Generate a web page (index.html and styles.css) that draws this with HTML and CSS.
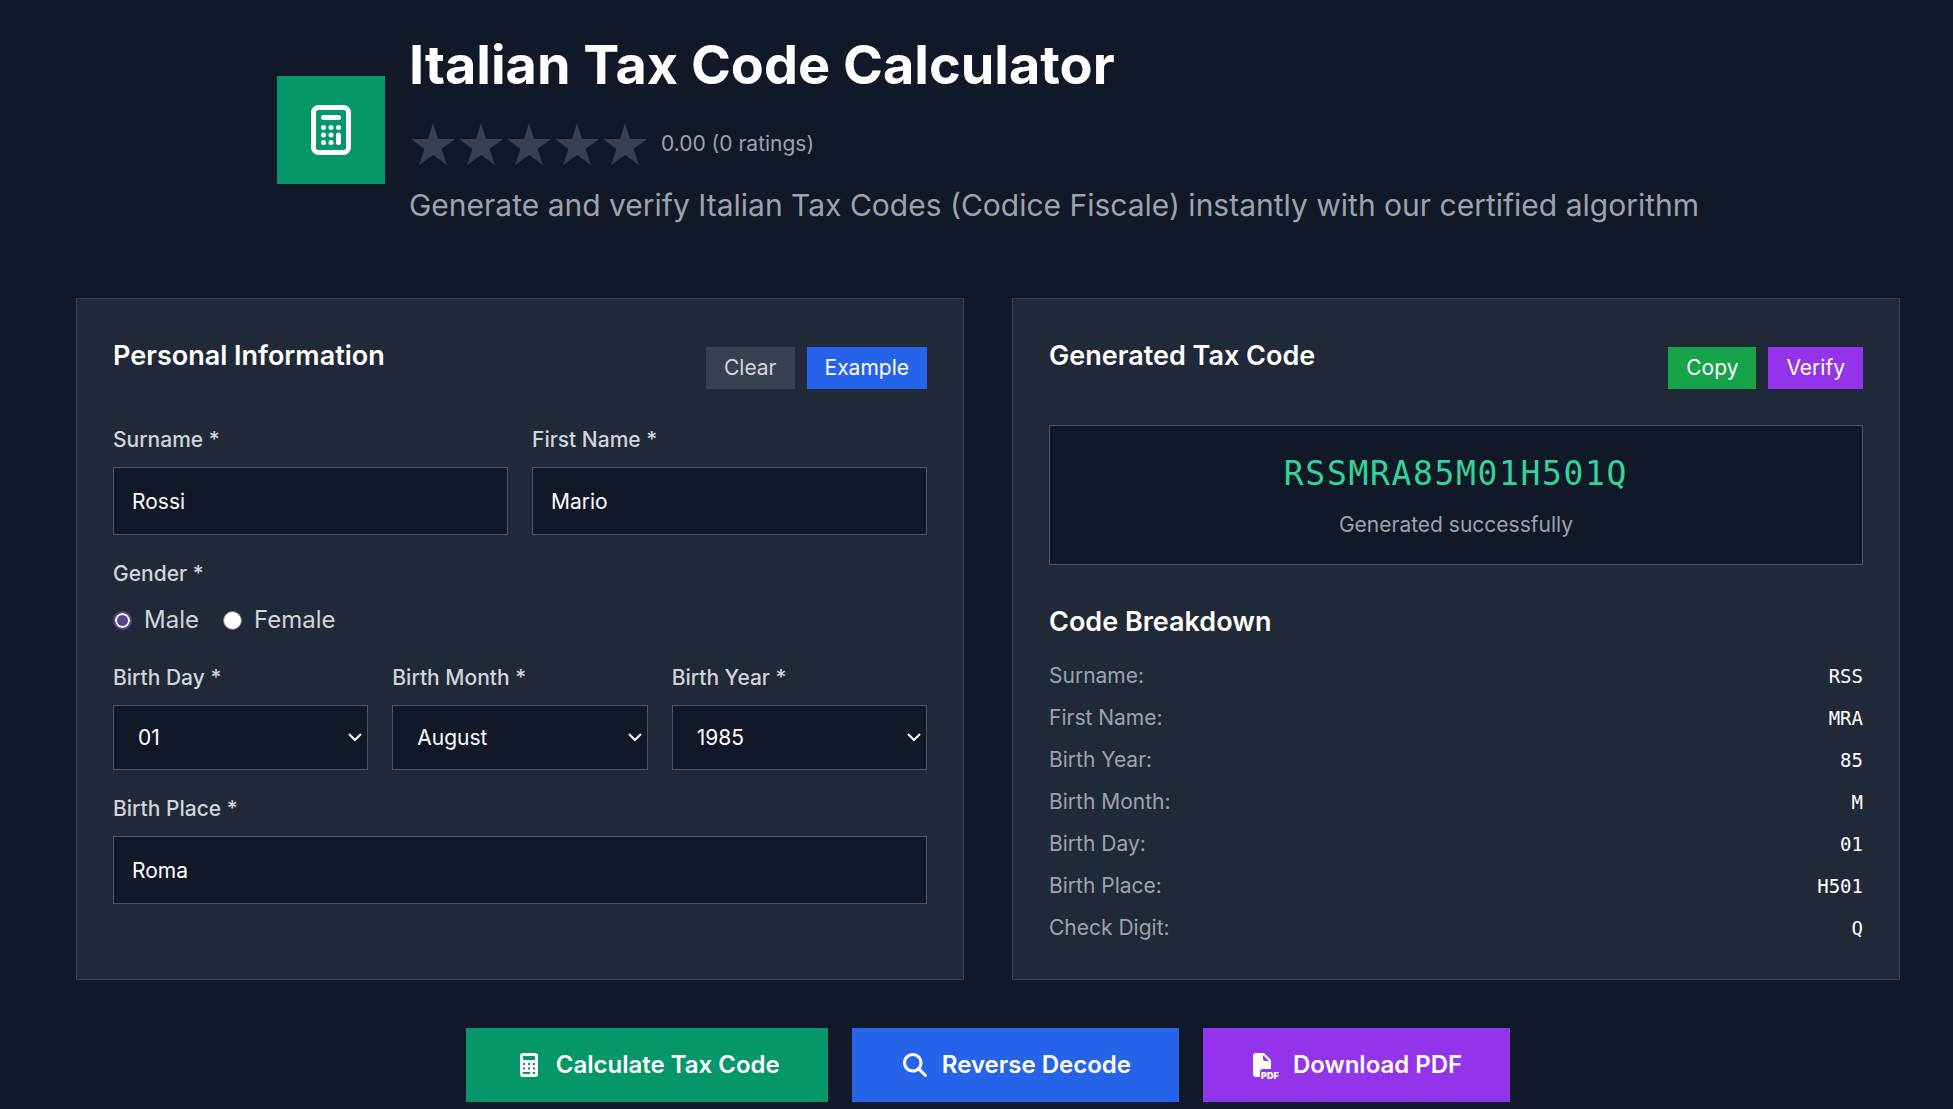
FILE: index.html
```html
<!DOCTYPE html>
<html lang="en">
<head>
    <meta charset="UTF-8">
    <meta name="viewport" content="width=device-width, initial-scale=1.0">
    <title>Italian Tax Code Calculator</title>
    <link rel="stylesheet" href="styles.css">
</head>
<body>
    <main class="page">
        <header class="header">
            <div class="header-icon">
                <svg viewBox="0 0 40 50" width="40" height="50" fill="none" stroke="#fff" stroke-width="5" stroke-linecap="round">
                    <rect x="2.5" y="2.5" width="35" height="45" rx="5"/>
                    <path d="M12.5 12.500h15"/>
                    <path d="M12.5 22.5h.01M20 22.5h.01M27.5 22.5h.01M12.5 30h.01M20 30h.01M12.5 37.5h.01M20 37.5h.01M27.5 30v7.5"/>
                </svg>
            </div>
            <div class="header-text">
                <h1>Italian Tax Code Calculator</h1>
                <div class="rating">
                    <div class="stars">
                        <svg viewBox="0 0 48 48"><path d="M24 3l5 16h17L32.5 29 38 45 24 35 10 45l5.5-16L2 19h17z"/></svg>
                        <svg viewBox="0 0 48 48"><path d="M24 3l5 16h17L32.5 29 38 45 24 35 10 45l5.5-16L2 19h17z"/></svg>
                        <svg viewBox="0 0 48 48"><path d="M24 3l5 16h17L32.5 29 38 45 24 35 10 45l5.5-16L2 19h17z"/></svg>
                        <svg viewBox="0 0 48 48"><path d="M24 3l5 16h17L32.5 29 38 45 24 35 10 45l5.5-16L2 19h17z"/></svg>
                        <svg viewBox="0 0 48 48"><path d="M24 3l5 16h17L32.5 29 38 45 24 35 10 45l5.5-16L2 19h17z"/></svg>
                    </div>
                    <span class="rating-text">0.00 (0 ratings)</span>
                </div>
                <p class="subtitle">Generate and verify Italian Tax Codes (Codice Fiscale) instantly with our certified algorithm</p>
            </div>
        </header>

        <div class="cards">
            <form class="card" id="tax-form">
                <div class="card-header">
                    <h2>Personal Information</h2>
                    <div class="card-buttons">
                        <button type="button" class="btn-small btn-gray">Clear</button>
                        <button type="button" class="btn-small btn-blue">Example</button>
                    </div>
                </div>

                <div class="row">
                    <div class="field">
                        <label for="surname">Surname *</label>
                        <input type="text" id="surname" value="Rossi">
                    </div>
                    <div class="field">
                        <label for="firstname">First Name *</label>
                        <input type="text" id="firstname" value="Mario">
                    </div>
                </div>

                <fieldset class="field">
                    <legend>Gender *</legend>
                    <div class="radios">
                        <label class="radio"><input type="radio" name="gender" value="M" checked>Male</label>
                        <label class="radio"><input type="radio" name="gender" value="F">Female</label>
                    </div>
                </fieldset>

                <div class="row">
                    <div class="field">
                        <label for="day">Birth Day *</label>
                        <select id="day"><option>01</option></select>
                    </div>
                    <div class="field">
                        <label for="month">Birth Month *</label>
                        <select id="month"><option>August</option></select>
                    </div>
                    <div class="field">
                        <label for="year">Birth Year *</label>
                        <select id="year"><option>1985</option></select>
                    </div>
                </div>

                <div class="field">
                    <label for="place">Birth Place *</label>
                    <input type="text" id="place" value="Roma">
                </div>
            </form>

            <section class="card">
                <div class="card-header">
                    <h2>Generated Tax Code</h2>
                    <div class="card-buttons">
                        <button type="button" class="btn-small btn-green">Copy</button>
                        <button type="button" class="btn-small btn-purple">Verify</button>
                    </div>
                </div>

                <div class="result">
                    <div class="result-code">RSSMRA85M01H501Q</div>
                    <div class="result-status">Generated successfully</div>
                </div>

                <div class="breakdown">
                    <h2>Code Breakdown</h2>
                    <dl>
                        <div><dt>Surname:</dt><dd>RSS</dd></div>
                        <div><dt>First Name:</dt><dd>MRA</dd></div>
                        <div><dt>Birth Year:</dt><dd>85</dd></div>
                        <div><dt>Birth Month:</dt><dd>M</dd></div>
                        <div><dt>Birth Day:</dt><dd>01</dd></div>
                        <div><dt>Birth Place:</dt><dd>H501</dd></div>
                        <div><dt>Check Digit:</dt><dd>Q</dd></div>
                    </dl>
                </div>
            </section>
        </div>

        <div class="actions">
            <button type="submit" form="tax-form" class="btn btn-emerald">
                <svg viewBox="-3 0 24 24" fill="currentColor"><path fill-rule="evenodd" d="M3 0h12a3 3 0 0 1 3 3v18a3 3 0 0 1-3 3H3a3 3 0 0 1-3-3V3a3 3 0 0 1 3-3zM4 3a1 1 0 0 0-1 1v2a1 1 0 0 0 1 1h10a1 1 0 0 0 1-1V4a1 1 0 0 0-1-1zM3 10v2h2v-2zM8 10v2h2v-2zM13 10v2h2v-2zM3 14.5v2h2v-2zM8 14.5v2h2v-2zM13 14.500v2h2v-2zM3 19v2h7v-2zM13 19v2h2v-2z"/></svg>
                Calculate Tax Code
            </button>
            <button type="button" class="btn btn-blue">
                <svg viewBox="0 0 512 512" fill="currentColor"><path d="M416 208c0 45.9-14.9 88.3-40 122.7L502.6 457.4c12.5 12.5 12.5 32.8 0 45.3s-32.8 12.5-45.3 0L330.7 376c-34.4 25.2-76.8 40-122.7 40C93.1 416 0 322.9 0 208S93.1 0 208 0S416 93.1 416 208zM208 352a144 144 0 1 0 0-288 144 144 0 1 0 0 288z"/></svg>
                Reverse Decode
            </button>
            <button type="button" class="btn btn-purple">
                <svg viewBox="1 0 24 24" fill="currentColor" aria-hidden="true">
                    <path fill-rule="evenodd" d="M3 0h8l7 7v9H10a3 3 0 0 0-3 3v5H3a3 3 0 0 1-3-3V3a3 3 0 0 1 3-3zM10 2v4a2 2 0 0 0 2 2h4z"/>
                    <text x="8" y="26" font-size="9" font-weight="900">PDF</text>
                </svg>
                Download PDF
            </button>
        </div>
    </main>
</body>
</html>
```
FILE: styles.css
```css
* {
    box-sizing: border-box;
    margin: 0;
    padding: 0;
}
body {
    font-family: Inter, 'Segoe UI', sans-serif;
    font-size: 24px;
    line-height: 38px;
    background: #111827;
    color: #fff;
}
button, input, select {
    font: inherit;
    color: inherit;
    border: none;
    border-radius: 0;
}
button {
    cursor: pointer;
}
.page {
    padding: 34px 53px 6px 76px;
}

/* Header */
.header {
    display: flex;
    align-items: center;
    justify-content: center;
    gap: 24px;
    margin-bottom: 72px;
}
.header-icon {
    display: flex;
    align-items: center;
    justify-content: center;
    width: 108px;
    height: 108px;
    background: #059669;
}
.header h1 {
    font-size: 54px;
    line-height: 62px;
    font-weight: 700;
}
.rating {
    display: flex;
    align-items: center;
    gap: 12px;
    padding: 24px 0 16px;
}
.stars {
    display: flex;
}
.stars svg {
    width: 48px;
    height: 48px;
    fill: #374151;
}
.rating-text {
    font-size: 21px;
    line-height: 30px;
    color: #9ca3af;
}
.subtitle {
    font-size: 30px;
    line-height: 42px;
    color: #9ca3af;
}

/* Cards */
.cards {
    display: grid;
    grid-template-columns: 1fr 1fr;
    gap: 48px;
    margin-bottom: 48px;
}
.card {
    display: flex;
    flex-direction: column;
    gap: 24px;
    padding: 36px;
    background: #1f2937;
    border: 1px solid #374151;
}
.card h2 {
    font-size: 27px;
    line-height: 42px;
    font-weight: 600;
}
.card-header {
    display: flex;
    justify-content: space-between;
    align-items: center;
}
.card-header h2 {
    margin-bottom: 24px;
}
.card-buttons {
    display: flex;
    gap: 12px;
}
.btn-small {
    padding: 6px 18px;
    font-size: 21px;
    line-height: 30px;
}

/* Form */
.row {
    display: flex;
    gap: 24px;
}
.field {
    flex: 1 1 0;
    min-width: 0;
    border: none;
}
.card > .field {
    flex: none;
}
.field > label, .field > legend {
    display: block;
    margin-bottom: 12px;
    font-size: 21px;
    line-height: 30px;
    font-weight: 500;
    color: #d1d5db;
}
.field > input, .field > select {
    display: block;
    width: 100%;
    background: #111827;
    border: 1px solid #4b5563;
    font-size: 21px;
}
.field > input {
    height: 68px;
    padding: 18px;
}
.field > select {
    appearance: none;
    height: 65px;
    padding: 0 24px;
    background: #111827 url("data:image/svg+xml,%3Csvg xmlns='http://www.w3.org/2000/svg' width='14' height='9' fill='none' stroke='white' stroke-width='2'%3E%3Cpath d='M1 1l6 6 6-6'/%3E%3C/svg%3E") no-repeat right 5px center;
}
.radios {
    display: flex;
    gap: 24px;
}
.radio {
    display: flex;
    align-items: center;
    gap: 12px;
    color: #d1d5db;
}
.radio input {
    appearance: none;
    width: 19px;
    height: 19px;
    background: #fff;
    border: 1px solid #767676;
    border-radius: 50%;
}
.radio input:checked {
    background: #54478c;
    border: 2px solid #54478c;
    box-shadow: inset 0 0 0 2px #fff;
}

/* Result */
.result {
    padding: 24px;
    background: #111827;
    border: 1px solid #4b5563;
    text-align: center;
}
.result-code {
    margin-bottom: 12px;
    font-family: Consolas, 'DejaVu Sans Mono', monospace;
    font-size: 33px;
    line-height: 48px;
    letter-spacing: 0.05em;
    color: #34d399;
}
.result-status {
    font-size: 21px;
    line-height: 30px;
    color: #9ca3af;
}
.breakdown {
    margin-top: 12px;
}
.breakdown h2 {
    margin-bottom: 18px;
}
.breakdown dl {
    display: flex;
    flex-direction: column;
    gap: 12px;
    font-size: 21px;
    line-height: 30px;
}
.breakdown dl div {
    display: flex;
    justify-content: space-between;
}
.breakdown dt {
    color: #9ca3af;
}
.breakdown dd {
    font-family: Consolas, 'DejaVu Sans Mono', monospace;
    font-size: 19px;
}

/* Actions */
.actions {
    display: flex;
    justify-content: center;
    gap: 24px;
}
.btn {
    display: flex;
    align-items: center;
    gap: 12px;
    padding: 18px 48px;
    font-weight: 600;
}
.btn svg {
    width: 30px;
    height: 24px;
    overflow: visible;
}
.btn-gray {
    background: #374151;
    color: #d1d5db;
}
.btn-blue {
    background: #2563eb;
}
.btn-green {
    background: #16a34a;
}
.btn-purple {
    background: #9333ea;
}
.btn-emerald {
    background: #059669;
}
```
